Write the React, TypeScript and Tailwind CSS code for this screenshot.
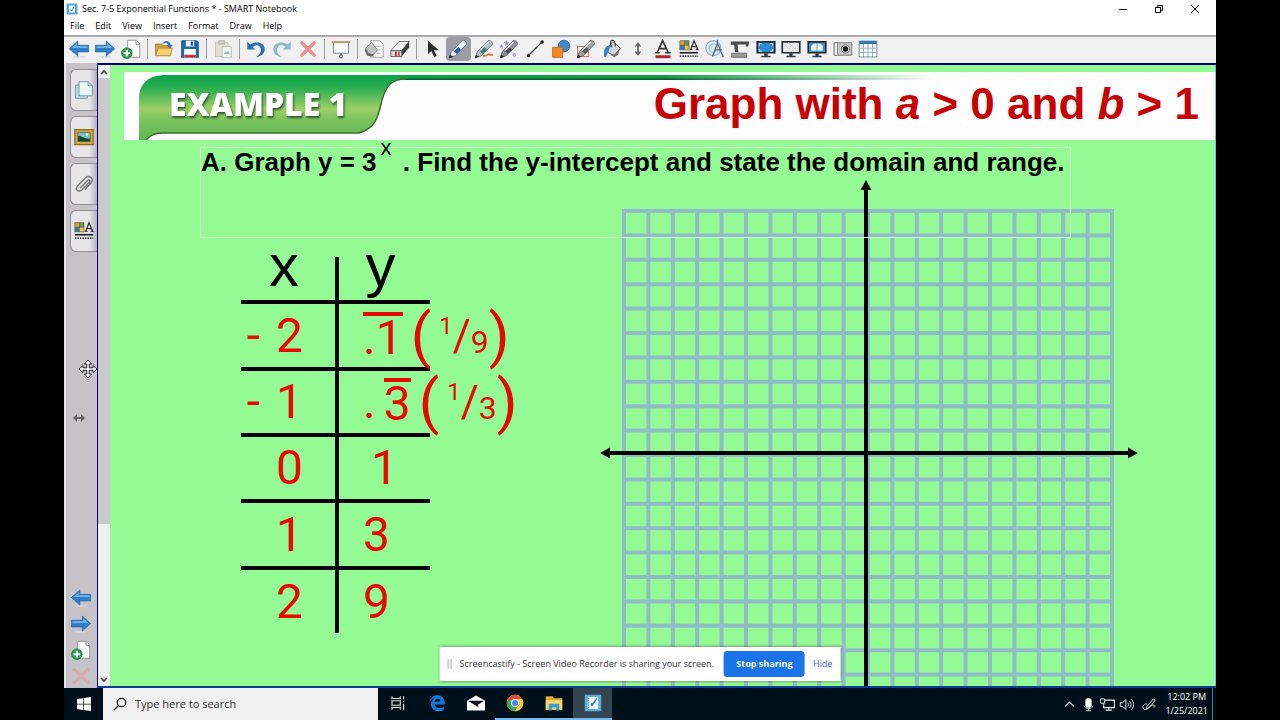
import type { ReactNode } from 'react';
import clsx from 'clsx';

type IconProps = { children: ReactNode; className?: string };

function Icon({ children, className }: IconProps) {
  return (
    <svg viewBox="0 0 24 24" className={clsx('shrink-0', className ?? 'h-5 w-5')} fill="none" aria-hidden="true">
      {children}
    </svg>
  );
}

const arrow = (flip: boolean) => (
  <g transform={flip ? 'translate(24 0) scale(-1 1)' : undefined}>
    <ellipse cx="12" cy="21.5" rx="8" ry="1" fill="#d4d4d8" />
    <path d="M.5 11.5 10.5 2.5v5h13v8h-13v5z" fill="#2f7fc9" stroke="#22619f" strokeWidth=".8" />
    <path d="M3 10.8 9.5 5v3.8h13v2z" fill="#6db2e8" />
  </g>
);

const cross = (color: string) => (
  <path d="m4.5 2 7.5 7 7.5-7L22 4.5 15 12l7 7.5-2.5 2.5-7.5-7-7.5 7L2 19.5 9 12 2 4.5z" fill={color} />
);

const newPage = (
  <>
    <path d="M8 1.5h10.5l4 4.5v16H8z" fill="#fafafa" stroke="#85898c" />
    <path d="M18 1.5v5h4.5" fill="#d8dcde" stroke="#85898c" />
    <circle cx="7" cy="17" r="6.3" fill="#2b9b4c" stroke="#17773a" />
    <path d="M7 13v8M3 17h8" stroke="#fff" strokeWidth="2.4" />
  </>
);

const propsIcon = (
  <>
    <path d="M1 2h5.5v5.5H1z" fill="#e0a21f" />
    <path d="M6.5 2H12v5.5H6.5z" fill="#5a9e4b" />
    <path d="M1 7.5h5.5V13H1z" fill="#3a78b4" />
    <path d="M6.5 7.5H12V13H6.5z" fill="#f2c530" />
    <path d="M1 2h11v11H1zM6.5 2v11M1 7.5h11" stroke="#555" strokeWidth=".8" />
    <path d="m14 12.5 4-10.5 4.5 10.5M15.5 9H21M13 12.5h3M20 12.5h3.5" stroke="#333" strokeWidth="1.5" />
    <path d="M1 16.5h22" stroke="#222" strokeWidth="2" />
    <path d="M1 20.5h22" stroke="#222" strokeWidth="1.3" strokeDasharray="2 1" />
  </>
);

const monitor = (screen: string, extra?: ReactNode) => (
  <>
    <path d="M1.5 3.5h21v13h-21z" fill={screen} stroke="#242a30" strokeWidth="2" />
    {extra}
    <path d="M10 17h4v3h3.5v2h-11v-2H10z" fill="#333a40" />
  </>
);

const pen = (body: string, band: string) => (
  <>
    <path d="M1.5 22.5 4 15 17 2c2-1.5 6 2 5 4.5L9 20z" fill={body} stroke="#4b535b" strokeWidth=".8" />
    <path d="m6 13.5 5-5 4.5 4.5-5 5z" fill={band} />
    <path d="M17.5 3.5 7 14" stroke="#f4f4f4" strokeWidth="1.5" />
    <path d="m1 23 1.6-4.5 3.4 3z" fill="#222" />
  </>
);

const leadTools: { name: string; art: ReactNode }[][] = [
  [
    { name: 'Previous page', art: arrow(false) },
    { name: 'Next page', art: arrow(true) },
    { name: 'Add page', art: newPage },
  ],
  [
    {
      name: 'Open',
      art: (
        <>
          <path d="M2 20V6h7l2 2h9v12z" fill="#cf9c3f" stroke="#a8782a" />
          <path d="m2 20 3-9h17l-2.5 9z" fill="#f4cf74" stroke="#bb8b35" />
          <path d="M10 6c2-5 9-5 10 1h2.5L19 11.5 15 7h2c-1-2.5-4-3-7-1z" fill="#2f78bd" />
        </>
      ),
    },
    {
      name: 'Save',
      art: (
        <>
          <path d="M2 2h18l2 2v18H2z" fill="#1f68ae" stroke="#174d84" />
          <path d="M7 2h10v7H7z" fill="#e8eef4" />
          <path d="M13 3h2.5v5H13z" fill="#1f4d80" />
          <path d="M5 12h14v10H5z" fill="#fff" />
          <path d="M5 19h14v3H5z" fill="#d92b35" />
        </>
      ),
    },
  ],
  [
    {
      name: 'Paste',
      art: (
        <g opacity=".6">
          <path d="M3 4h15v17H3z" fill="#ddd3c1" stroke="#a79c86" />
          <path d="M7 2h7v4H7z" fill="#b5b5b5" stroke="#858585" />
          <path d="M11 9h11v13H11z" fill="#f5f8f7" stroke="#8b9997" />
          <path d="M13 18h7l-2-4-2 2-1-1z" fill="#6b9b91" />
        </g>
      ),
    },
  ],
  [
    {
      name: 'Undo',
      art: <path d="M1.5 3v9.5H11l-3-3c5-4 10-1 10 3.500 0 4-2.5 6.500-6 8.500 6-.5 10.500-4 10.500-9 0-8-10-11-17.500-6z" fill="#2a6eb4" />,
    },
    {
      name: 'Redo',
      art: <path d="M22.5 3v9.5H13l3-3c-5-4-10-1-10 3.500 0 4 2.500 6.500 6 8.500-6-.5-10.500-4-10.500-9 0-8 10-11 17.500-6z" fill="#8db9d3" />,
    },
    { name: 'Delete', art: cross('#ea8d8b') },
  ],
  [
    {
      name: 'Screen shade',
      art: (
        <>
          <path d="M3 4h18v13H3z" fill="#f7fafc" stroke="#70777d" />
          <path d="M1 2.500h22V5H1z" fill="#ae9b70" />
          <path d="M12 17v2.5" stroke="#333" />
          <circle cx="12" cy="21" r="1.8" stroke="#333" />
        </>
      ),
    },
  ],
  [
    {
      name: 'Clear page',
      art: (
        <>
          <path d="M8 2h11l4 4v16H8z" fill="#f8f8f8" stroke="#999" />
          <path d="M12 9h8M14 13h6M14 17h6" stroke="#aaa" />
          <path d="M2 11 9 4l7 9-5 6-6-2z" fill="#c4c4c4" stroke="#777" />
          <path d="m2 11 3 6 6 2 1 2-8-1-3-6z" fill="#666" />
        </>
      ),
    },
    {
      name: 'Eraser',
      art: (
        <>
          <path d="M1 14 11 3h12l-9 11z" fill="#f6f6f6" stroke="#555" />
          <path d="M14 14 23 3v7l-9 11z" fill="#3a3a3a" />
          <path d="M1 14h13v7H1z" fill="#dcdcdc" stroke="#555" />
          <path d="M6 15h2v5.5H6zM10 15h1.500v5.5H10z" fill="#c3202b" />
        </>
      ),
    },
  ],
];

const drawTools: { name: string; art: ReactNode; active?: boolean }[] = [
  {
    name: 'Select',
    art: <path d="M6 2v16l4-3.5 3.5 7.500 3-1.500-3.5-7h6z" fill="#2b2b2b" />,
  },
  { name: 'Pens', art: pen('#e4ebf2', '#1f5ca8'), active: true },
  {
    name: 'Highlighter',
    art: (
      <>
        {pen('#b4c0c8', '#3b7c8c')}
        <path d="M11 21c2-3 3 1 5-2s3 2 7 0" stroke="#d9703a" strokeWidth="2" />
      </>
    ),
  },
  {
    name: 'Magic pen',
    art: (
      <>
        {pen('#8d9095', '#4a4d52')}
        <path d="m9 1 1 2.500 2.500.5-2 1.500.5 2.500-2-1.500L7 8l.5-2.500-2-1.500L8 3.500z" fill="#a18be0" />
        <path d="m3 6 .7 1.800 1.800.4-1.300 1.200.3 1.900L3 10.300l-1.500 1 .3-1.900L.5 8.200l1.800-.4z" fill="#a18be0" />
        <circle cx="18.5" cy="19" r="2.3" fill="#b6a6ea" />
      </>
    ),
  },
  {
    name: 'Lines',
    art: (
      <>
        <path d="M4 20 20 4" stroke="#222" strokeWidth="1.5" />
        <circle cx="4" cy="20" r="2" fill="#111" />
        <circle cx="20.5" cy="3.5" r="2" fill="#111" />
      </>
    ),
  },
  {
    name: 'Shapes',
    art: (
      <>
        <circle cx="15.5" cy="8.5" r="7" fill="#4387cd" stroke="#285f9b" />
        <path d="M2 10h12v12H2z" fill="#f38a1d" stroke="#c3640d" />
      </>
    ),
  },
  {
    name: 'Shape recognition pen',
    art: (
      <>
        <path d="M2 9h13v12H2z" stroke="#d4736f" strokeWidth="1.4" />
        {pen('#a2a39d', '#5f605b')}
      </>
    ),
  },
  {
    name: 'Fill',
    art: (
      <>
        <path d="M8 9 13 3l9 8-7 9-8-4z" fill="#d4d5d5" stroke="#444" />
        <path d="M12 10C9 5 10 1.500 12.500 1.500S16 5 16 9" stroke="#333" strokeWidth="1.3" />
        <path d="m14 19 8-8-3 8-4 3-6-3z" fill="#6f7273" />
        <path d="M11 8C5 7 2 11 2.500 21c3 2 4-3 4.500-6z" fill="#2d84cf" />
      </>
    ),
  },
  {
    name: 'Move toolbar',
    art: <path d="M12 3.500 16 9h-3v6h3l-4 5.500L8 15h3V9H8z" fill="#666" />,
  },
  {
    name: 'Text',
    art: (
      <>
        <path d="M5 16.500 11.500 2l7 14.500M8 11.500h8M2.500 16.500H8M14.500 16.500h7" stroke="#333" strokeWidth="2" />
        <path d="M3 19.500h18V23H3z" fill="#b5222e" />
      </>
    ),
  },
  { name: 'Properties', art: propsIcon },
  {
    name: 'Measurement tools',
    art: (
      <>
        <circle cx="10" cy="11" r="9" stroke="#8ab4d0" strokeWidth="1.5" fill="#dcecf5" />
        <circle cx="10" cy="11" r="5" stroke="#8ab4d0" />
        <path d="M15 1v4M15 5 9 21M15 5l7 17M11 13h9" stroke="#5d6770" strokeWidth="1.6" />
      </>
    ),
  },
  {
    name: 'Document camera',
    art: (
      <>
        <path d="M1 3h22l-1 6h-3V6.500H9L10 16H6L5 7H1z" fill="#4b4b4b" />
        <path d="M2 17h18v5H2z" fill="#9b9b9b" stroke="#666" />
      </>
    ),
  },
  {
    name: 'Full screen',
    art: monitor('#2d8ad0', <path d="M4 8V5.500h3M17 5.500h3V8M4 12v2.500h3M17 14.500h3V12" stroke="#d6edfc" strokeWidth="1.2" />),
  },
  {
    name: 'Transparent background',
    art: monitor('#ececec', <path d="m3 10 6-6M6 15 17 4M13 15l8-8M3 6l9 9M9 4l11 11" stroke="#ccc" />),
  },
  {
    name: 'Dual page',
    art: monitor('#3a94d4', <path d="M5 14V8.500l3-3h3.500V14zM12.500 5.500H16l3 3V14h-6.500z" fill="#eef6fb" />),
  },
  {
    name: 'Screen capture',
    art: (
      <>
        <path d="M1.5 4.500h21v15h-21z" fill="#c6c6c6" stroke="#6d6d6d" />
        <path d="M1.5 4.500h4v15h-4z" fill="#efefef" stroke="#777" />
        <circle cx="15" cy="12" r="5" fill="#d9d9d9" stroke="#666" />
        <circle cx="15" cy="12" r="3.2" fill="#1c1c1c" />
      </>
    ),
  },
  {
    name: 'Table',
    art: (
      <>
        <path d="M1.5 2.500h21v19h-21z" fill="#fff" stroke="#57809c" />
        <path d="M1.5 2.500h21V6h-21z" fill="#2f78ad" />
        <path d="M6.700 6v15.500M12 6v15.500M17.300 6v15.500M1.500 11h21M1.500 16h21" stroke="#7e9fb5" />
      </>
    ),
  },
];

const sideTabs: { name: string; art: ReactNode }[] = [
  {
    name: 'Page sorter',
    art: (
      <>
        <path d="M2 6h14v16H2z" fill="#c3e2e5" stroke="#5c8c92" />
        <path d="M6 2h11l5 5v12H6z" fill="#e9f7f7" stroke="#5c8c92" />
        <path d="M17 2v5h5" stroke="#5c8c92" />
      </>
    ),
  },
  {
    name: 'Gallery',
    art: (
      <>
        <path d="M1 3h22v18H1z" fill="#d3aa4a" stroke="#8e6a20" strokeWidth="1.5" />
        <path d="M4.500 6.500h15v11h-15z" fill="#6fc4d8" stroke="#7b5c1c" />
        <path d="M5 17v-6c4-1 5 3 14 3v3z" fill="#12472f" />
        <circle cx="15.5" cy="9" r="1.5" fill="#fff" />
      </>
    ),
  },
  {
    name: 'Attachments',
    art: <path d="m7 17 9-9c2-2 4 0 2.500 2L9 19.500c-4 3-8-1-5-5L14 4.500c4-3.500 10 .5 7 5.500l-8 9" stroke="#77777a" strokeWidth="1.7" />,
  },
  { name: 'Properties tab', art: propsIcon },
];

function Divider() {
  return <span className="mx-[3px] h-5 w-px shrink-0 bg-[#9c9c9c]" />;
}

function TitleBar() {
  return (
    <header className="flex h-[18px] items-center bg-white pl-0.5">
      <Icon className="h-3 w-3">
        <path d="M1 1h22v22H1z" fill="#55a9d8" />
        <path d="M6 5h12v14H6z" fill="#f5fbff" />
        <path d="m9 13 2 3 5-9" stroke="#2d83b8" strokeWidth="2" />
      </Icon>
      <h1 className="ml-1 text-[9px] text-black">Sec. 7-5 Exponential Functions * - SMART Notebook</h1>
      <div className="ml-auto flex pr-[3px] text-black">
        <button aria-label="Minimize" className="flex w-9 justify-center">
          <svg viewBox="0 0 10 10" className="h-2.5 w-2.5" stroke="currentColor"><path d="M1 5.500h8" /></svg>
        </button>
        <button aria-label="Restore" className="flex w-9 justify-center">
          <svg viewBox="0 0 10 10" className="h-2.5 w-2.5" stroke="currentColor" fill="none">
            <path d="M1.500 3.500h5v5h-5zM3.500 3.500v-2h5v5h-2" />
          </svg>
        </button>
        <button aria-label="Close" className="flex w-9 justify-center">
          <svg viewBox="0 0 10 10" className="h-2.5 w-2.5" stroke="currentColor"><path d="m1 1 8 8M9 1 1 9" /></svg>
        </button>
      </div>
    </header>
  );
}

function MenuBar() {
  const menus = ['File', 'Edit', 'View', 'Insert', 'Format', 'Draw', 'Help'];
  return (
    <nav className="flex h-[17px] items-center gap-[11px] bg-white pb-0.5 pl-1.5 text-[9px] text-black">
      {menus.map((m) => (
        <button key={m}>{m}</button>
      ))}
    </nav>
  );
}

function Toolbar() {
  return (
    <div className="flex h-7 items-center border-t-2 border-[#a9a9a9] bg-[#f0f0f0] pb-0.5 pl-0.5">
      {leadTools.map((group, i) => (
        <div key={i} className="flex items-center">
          {group.map((t) => (
            <button key={t.name} aria-label={t.name} className="flex w-[26px] justify-center">
              <Icon>{t.art}</Icon>
            </button>
          ))}
          <Divider />
        </div>
      ))}
      <div className="flex w-[461px] justify-between">
        {drawTools.map((t) => (
          <button
            key={t.name}
            aria-label={t.name}
            className={clsx('flex h-6 w-[25px] items-center justify-center rounded-sm', t.active && 'bg-[#9a9da3]')}
          >
            <Icon>{t.art}</Icon>
          </button>
        ))}
      </div>
    </div>
  );
}

function Sidebar() {
  return (
    <aside className="relative flex w-[33px] shrink-0 flex-col border-l-2 border-[#e4e4e8] bg-[#c5c3c7]">
      <div className="flex flex-col gap-[5px] pt-1.5 pl-1">
        {sideTabs.map((t) => (
          <button
            key={t.name}
            aria-label={t.name}
            className="flex h-[42px] items-center justify-center rounded-l-md border border-r-0 border-[#8f8e92] bg-linear-to-r from-[#e6e5e8] from-70% to-[#b3b2b6]"
          >
            <Icon>{t.art}</Icon>
          </button>
        ))}
      </div>
      <div className="mt-auto flex flex-col items-center gap-1.5 pr-0.5 pb-0.5">
        <button aria-label="Back"><Icon>{arrow(false)}</Icon></button>
        <button aria-label="Forward"><Icon>{arrow(true)}</Icon></button>
        <button aria-label="Insert page"><Icon>{newPage}</Icon></button>
        <button aria-label="Remove page"><Icon>{cross('#d9a9ab')}</Icon></button>
      </div>
      <svg viewBox="0 0 12 8" className="absolute top-[351px] left-[7px] h-2 w-3" fill="#666" aria-hidden="true">
        <path d="M0 4 4 0v3h4V0l4 4-4 4V5H4v3z" />
      </svg>
      <svg viewBox="0 0 20 20" className="absolute top-[296px] left-3 z-10 h-5 w-5" aria-hidden="true">
        <path
          d="m10 1 3.500 4h-2.300v3.800H15V6.500l4 3.500-4 3.500v-2.300h-3.800V15h2.300L10 19l-3.500-4h2.300v-3.800H5v2.300L1 10l4-3.500v2.300h3.800V5H6.500z"
          fill="#fff"
          stroke="#222"
        />
      </svg>
    </aside>
  );
}

function ScrollBar() {
  return (
    <div className="flex w-3 shrink-0 flex-col bg-[#f0f0f0] text-[#444]">
      <button aria-label="Scroll up" className="flex h-[13px] items-center justify-center">
        <svg viewBox="0 0 8 6" className="h-1.5 w-2" fill="none" stroke="currentColor" strokeWidth="1.6"><path d="m1 5 3-3 3 3" /></svg>
      </button>
      <div className="grow">
        <div className="h-3/4 bg-[#cac8cb]" />
      </div>
      <button aria-label="Scroll down" className="flex h-[13px] items-center justify-center">
        <svg viewBox="0 0 8 6" className="h-1.5 w-2" fill="none" stroke="currentColor" strokeWidth="1.6"><path d="m1 1 3 3 3-3" /></svg>
      </button>
    </div>
  );
}

function Banner() {
  return (
    <div className="absolute top-[7px] right-0 left-3.5 flex h-[68px] items-center justify-between overflow-hidden bg-[#fdfdfe] pr-4 pb-1 pl-[45px]">
      <svg viewBox="0 0 820 68" className="absolute top-0 left-0 h-[68px] w-[820px]" fill="none" aria-hidden="true">
        <defs>
          <linearGradient id="tab" x1="0" y1="0" x2="0" y2="1">
            <stop offset="0" stopColor="#0ba24a" />
            <stop offset=".2" stopColor="#2bad50" />
            <stop offset=".52" stopColor="#9dd067" />
            <stop offset=".7" stopColor="#79c35c" />
            <stop offset="1" stopColor="#62b756" />
          </linearGradient>
          <linearGradient id="rule" x1="0" y1="0" x2="1" y2="0">
            <stop offset="0" stopColor="#0ba24a" />
            <stop offset=".5" stopColor="#0f9a4b" />
            <stop offset="1" stopColor="#0f9a4b" stopOpacity="0" />
          </linearGradient>
          <linearGradient id="edge" x1="0" y1="0" x2="1" y2="0">
            <stop offset="0" stopColor="#14592f" />
            <stop offset=".5" stopColor="#14592f" />
            <stop offset="1" stopColor="#14592f" stopOpacity="0" />
          </linearGradient>
        </defs>
        <path d="M270 3h540v4H270z" fill="url(#rule)" />
        <path d="M280 6.500h530V8H280z" fill="url(#edge)" />
        <path
          d="M15 68V27C15 11 25 3 42 3h240v4c-15 0-20 7-24 21-4 17-6 28-23 33H38c-8 0-12 2-16 7z"
          fill="url(#tab)"
        />
        <path d="M22 68c4-5 8-7 16-7h197c17-5 19-16 23-33 4-14 9-21 24-21" stroke="#3d6b35" strokeWidth="1.5" />
      </svg>
      <span className="relative font-['Open_Sans',sans-serif] text-[32px] leading-none font-extrabold text-white drop-shadow-[1px_2px_1px_#2d5a2d]">
        EXAMPLE 1
      </span>
      <h2 className="relative font-['Liberation_Sans',sans-serif] text-[44px] leading-none font-bold text-[#c60205]">
        Graph with <i>a</i> &gt; 0 and <i>b</i> &gt; 1
      </h2>
    </div>
  );
}

function CoordinateGrid() {
  const steps = Array.from({ length: 21 }, (_, i) => i * 24.4);
  return (
    <svg viewBox="0 0 540 580" className="absolute top-[115px] left-[490px] h-[580px] w-[540px]" aria-hidden="true">
      <g stroke="#90bcc8" strokeWidth="4">
        {steps.map((s) => (
          <g key={s}>
            <path d={`M${24 + s} 29v490`} />
            <path d={`M22 ${31 + s}h492`} />
          </g>
        ))}
      </g>
      <path d="M266 8v572M8 273h522" stroke="#000" strokeWidth="4" />
      <path d="m266 0 5.500 10h-11zM538 273l-10 5.500v-11zM0 273l10-5.500v11z" />
    </svg>
  );
}

function Repeating({ children }: { children: ReactNode }) {
  return <span className="border-t-4 border-[#e60a05] leading-[44px]">{children}</span>;
}

function Fraction({ top, bottom }: { top: string; bottom: string }) {
  return (
    <span className="flex items-center">
      <span className="pr-2 text-[60px] leading-10">(</span>
      <span className="pb-5 text-2xl leading-6">{top}</span>
      <span className="text-[44px] leading-10">/</span>
      <span className="pt-3 text-[32px] leading-8">{bottom}</span>
      <span className="text-[60px] leading-10">)</span>
    </span>
  );
}

const rows: { x: ReactNode; y: ReactNode; height: string }[] = [
  {
    x: <><span>-</span><span>2</span></>,
    y: <><Repeating>.1</Repeating><Fraction top="1" bottom="9" /></>,
    height: 'h-[67px]',
  },
  {
    x: <><span>-</span><span>1</span></>,
    y: <><span>.</span><Repeating>3</Repeating><Fraction top="1" bottom="3" /></>,
    height: 'h-[66px]',
  },
  { x: '0', y: <span className="pl-2">1</span>, height: 'h-[66px]' },
  { x: '1', y: '3', height: 'h-[67px]' },
  { x: '2', y: '9', height: 'h-[63px]' },
];

function ValueTable() {
  return (
    <table className="absolute top-[192px] left-[131px] w-[189px] table-fixed border-separate border-spacing-0 font-['Liberation_Sans',sans-serif] text-black">
      <thead>
        <tr className="h-[47px] text-[60px] leading-4">
          <th className="w-[98px] border-r-4 border-b-4 border-black p-0 pr-2 pb-[26px] align-middle font-normal">x</th>
          <th className="border-b-4 border-black p-0 pr-2 pb-[26px] align-middle font-normal">y</th>
        </tr>
      </thead>
      <tbody className="font-['Roboto',sans-serif] text-5xl leading-10 text-[#e60a05]">
        {rows.map((r, i) => {
          const line = i < rows.length - 1 && 'border-b-4';
          return (
            <tr key={i} className={r.height}>
              <td className={clsx('border-r-4 border-black p-0', line)}>
                <div className="flex h-12 items-center justify-end gap-4 pr-8 leading-10">{r.x}</div>
              </td>
              <td className={clsx('border-black p-0', line)}>
                <div className="flex h-12 items-center gap-2 pl-6 leading-10 whitespace-nowrap">{r.y}</div>
              </td>
            </tr>
          );
        })}
      </tbody>
    </table>
  );
}

function NotebookPage() {
  return (
    <main className="relative grow overflow-hidden border-r border-[#7fb8ee] bg-[#94fa94]">
      <Banner />
      <CoordinateGrid />
      <div className="absolute top-[82px] left-[90px] h-[91px] w-[871px] border border-[#cdfccd] whitespace-nowrap">
        <p className="font-['Liberation_Sans',sans-serif] text-[26px] leading-7 font-bold text-black">
          A. Graph y = 3<sup className="-top-4 mx-1 text-[22px] leading-none font-normal">x</sup> . Find the y-intercept and state the domain and range.
        </p>
      </div>
      <ValueTable />
    </main>
  );
}

function ShareNotice() {
  return (
    <div className="absolute bottom-[39px] left-1/2 flex h-[34px] -translate-x-1/2 items-center bg-white px-2 text-[9px] whitespace-nowrap text-[#333] shadow-[0_0_3px_#555]">
      <span className="mr-2 h-2.5 w-1 border-x border-[#aaa]" />
      <span>Screencastify - Screen Video Recorder is sharing your screen.</span>
      <button className="ml-2.5 h-[26px] w-[81px] rounded-sm bg-[#1a73e8] font-bold text-white">Stop sharing</button>
      <button className="ml-2 text-[#3b6fd0]">Hide</button>
    </div>
  );
}

const apps: { name: string; art: ReactNode; open?: boolean; active?: boolean }[] = [
  {
    name: 'Task view',
    art: <path d="M4 3v3h11V3M4 9h11v6H4zM4 21v-3h11v3M19.500 3v4M19.500 9v2M19.500 13v8" stroke="#e6e6e6" strokeWidth="1.5" />,
  },
  {
    name: 'Edge',
    art: (
      <path
        d="M2 11C3 5 7 1.500 12.500 1.500c6 0 10 4 10 10V14H9c.5 5 7 6 12 3v4.500c-8 4-17 0-17-8 0-3 2-6 4.500-7.500C5 6.500 3 8.500 2 11zm7-1h7.500c0-5-7-5-7.500 0z"
        fill="#0f78d4"
      />
    ),
  },
  {
    name: 'Mail',
    art: (
      <>
        <path d="M0 9 12 2l12 7v13H0z" fill="#fff" />
        <path d="M1 9h22l-9 5.500 2 3.500z" fill="#00101c" />
      </>
    ),
  },
  {
    name: 'Chrome',
    open: true,
    art: (
      <>
        <circle cx="12" cy="12" r="11" fill="#f7c633" />
        <path d="M12 12 2.500 6.500A11 11 0 0 1 21.500 6.500H12z" fill="#dd4b39" />
        <path d="M12 12 2.500 6.500A11 11 0 0 0 12 23l5-8z" fill="#3aa757" />
        <path d="M12 6.500h9.500A11 11 0 0 1 12 23l5-8z" fill="#f7c633" />
        <circle cx="12" cy="12" r="5.3" fill="#fff" />
        <circle cx="12" cy="12" r="4" fill="#4285f4" />
      </>
    ),
  },
  {
    name: 'File Explorer',
    open: true,
    art: (
      <>
        <path d="M1 3h9l2 2.500h11V21H1z" fill="#e3a931" />
        <path d="M1 8h22v13H1z" fill="#f9d568" />
        <path d="M5 13h14v9h-4v-4H9v4H5z" fill="#3e9bd0" />
      </>
    ),
  },
  {
    name: 'SMART Notebook',
    open: true,
    active: true,
    art: (
      <>
        <path d="M1 1h22v22H1z" fill="#56aedb" />
        <path d="M5 4h14v16H5z" fill="#f5fbff" />
        <path d="M6 5v14" stroke="#3a8ebf" strokeWidth="2" strokeDasharray="1.5 1.5" />
        <path d="m10 16 7-10M10 12v4" stroke="#2d83b8" strokeWidth="2" />
      </>
    ),
  },
];

function Taskbar() {
  return (
    <footer className="flex h-8 items-center bg-[#00101b] text-white">
      <button aria-label="Start" className="flex w-[39px] justify-center">
        <svg viewBox="0 0 14 14" className="h-3.5 w-3.5" fill="#fff" aria-hidden="true">
          <path d="m0 2 6-.8v5.500H0zM6.700 1 14 0v6.700H6.700zM0 7.400h6v5.500L0 12zM6.700 7.400H14V14l-7.300-1z" />
        </svg>
      </button>
      <label className="flex h-8 w-[275px] items-center gap-2 bg-[#f0f0f0] pl-2.5">
        <svg viewBox="0 0 14 14" className="h-3.5 w-3.5" fill="none" stroke="#222" strokeWidth="1.3" aria-hidden="true">
          <circle cx="8.5" cy="5.5" r="4.2" />
          <path d="M5.500 8.500 1 13" />
        </svg>
        <input
          aria-label="Search"
          placeholder="Type here to search"
          className="min-w-0 grow bg-transparent text-[11px] text-black outline-none placeholder:text-[#333]"
        />
      </label>
      <div className="flex h-full">
        {apps.map((a) => (
          <button
            key={a.name}
            aria-label={a.name}
            className={clsx(
              'flex w-[39px] items-center justify-center border-b-2',
              a.open ? 'border-[#76b9ed]' : 'border-transparent',
              a.active && 'bg-[#33454f]',
            )}
          >
            <Icon className="h-[18px] w-[18px]">{a.art}</Icon>
          </button>
        ))}
      </div>
      <div className="ml-auto flex items-center gap-1">
        <Icon className="h-[15px] w-[15px]"><path d="m5 15 7-7 7 7" stroke="#ddd" strokeWidth="1.8" /></Icon>
        <Icon className="h-[15px] w-[15px]">
          <rect x="7" y="2" width="10" height="15" rx="4" fill="#fff" />
          <path d="M5 14c1 6 13 6 14 0M12 18v4M8 22h8" stroke="#ccc" strokeWidth="1.5" />
        </Icon>
        <Icon className="h-[15px] w-[15px]">
          <path d="M6 5h17v12H6zM14 17v4M9 21h10" stroke="#eee" strokeWidth="1.7" />
          <path d="M1 3h6v7H1z" fill="#00101b" stroke="#eee" strokeWidth="1.5" />
        </Icon>
        <Icon className="h-[15px] w-[15px]">
          <path d="M2 9v6h4l5 5V4L6 9zM14 9c1.500 2 1.500 4 0 6M17 6.500c3 3 3 8 0 11M20 4c4.500 5 4.500 11 0 16" stroke="#eee" strokeWidth="1.5" />
        </Icon>
        <Icon className="ml-1 h-[15px] w-[15px]">
          <path d="M8 15 18 3l3 2-9 12-5 2zM8 11c-8 0-8 9-3 9 6 0 6-6 11-7 4-1 6 2 3 4" stroke="#ddd" strokeWidth="1.5" />
        </Icon>
        <div className="ml-1 text-center text-[9px] leading-[14px]">
          <div>12:02 PM</div>
          <div>1/25/2021</div>
        </div>
        <span className="mr-[3px] h-8 w-px bg-[#67737a]" />
      </div>
    </footer>
  );
}

export default function App() {
  return (
    <div className="min-h-screen bg-black px-16 font-['Open_Sans',sans-serif]">
      <div className="relative flex h-screen flex-col overflow-hidden">
        <TitleBar />
        <MenuBar />
        <Toolbar />
        <div className="flex min-h-0 grow">
          <Sidebar />
          <div className="flex min-w-0 grow border-y-2 border-l border-[#00007c] border-b-[#0a3f8c]">
            <ScrollBar />
            <NotebookPage />
          </div>
        </div>
        <ShareNotice />
        <Taskbar />
      </div>
    </div>
  );
}
